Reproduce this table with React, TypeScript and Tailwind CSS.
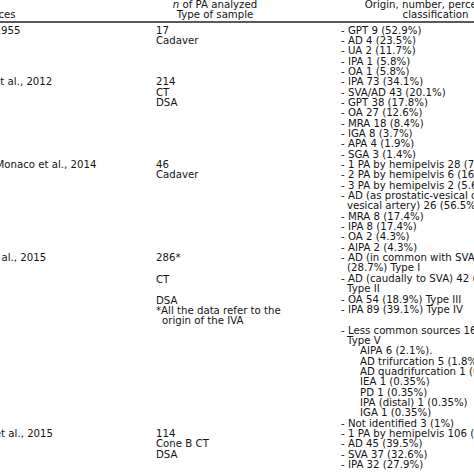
type Line = { t: string; i?: 0 | 1 | 2; h?: string };

type Row = { ref: string; n: Line[]; origin: Line[] };

const ROWS: Row[] = [
  {
    ref: 'Clegg, 1955',
    n: [{ t: '17' }, { t: 'Cadaver' }],
    origin: [
      { t: '- GPT 9 (52.9%)' },
      { t: '- AD 4 (23.5%)' },
      { t: '- UA 2 (11.7%)' },
      { t: '- IPA 1 (5.8%)' },
      { t: '- OA 1 (5.8%)' },
    ],
  },
  {
    ref: 'Bilhim et al., 2012',
    n: [{ t: '214' }, { t: 'CT' }, { t: 'DSA' }],
    origin: [
      { t: '- IPA 73 (34.1%)' },
      { t: '- SVA/AD 43 (20.1%)' },
      { t: '- GPT 38 (17.8%)' },
      { t: '- OA 27 (12.6%)' },
      { t: '- MRA 18 (8.4%)' },
      { t: '- IGA 8 (3.7%)' },
      { t: '- APA 4 (1.9%)' },
      { t: '- SGA 3 (1.4%)' },
    ],
  },
  {
    ref: 'Garcia-Monaco et al., 2014',
    n: [{ t: '46' }, { t: 'Cadaver' }],
    origin: [
      { t: '- 1 PA by hemipelvis 28 (77.8%)' },
      { t: '- 2 PA by hemipelvis 6 (16.7%)' },
      { t: '- 3 PA by hemipelvis 2 (5.6%)' },
      { t: '- AD (as prostatic-vesical or inferior' },
      { t: 'vesical artery) 26 (56.5%)', i: 1 },
      { t: '- MRA 8 (17.4%)' },
      { t: '- IPA 8 (17.4%)' },
      { t: '- OA 2 (4.3%)' },
      { t: '- AIPA 2 (4.3%)' },
    ],
  },
  {
    ref: 'Assis et al., 2015',
    n: [
      { t: '286*' },
      { t: '', h: 'h-[11.5px]' },
      { t: 'CT' },
      { t: '', h: 'h-[11px]' },
      { t: 'DSA', h: 'h-[9.6px] leading-[9.6px]' },
      { t: '*All the data refer to the', h: 'h-[9.6px] leading-[9.6px]' },
      { t: 'origin of the IVA', i: 1 },
    ],
    origin: [
      { t: '- AD (in common with SVA) 82' },
      { t: '(28.7%) Type I', i: 1 },
      { t: '- AD (caudally to SVA) 42 (14.7%)' },
      { t: 'Type II', i: 1 },
      { t: '- OA 54 (18.9%) Type III' },
      { t: '- IPA 89 (39.1%) Type IV' },
      { t: '' },
      { t: '- Less common sources 16 (5.6%)' },
      { t: 'Type V', i: 1 },
      { t: 'AIPA 6 (2.1%).', i: 2 },
      { t: 'AD trifurcation 5 (1.8%)', i: 2 },
      { t: 'AD quadrifurcation 1 (0.35%)', i: 2 },
      { t: 'IEA 1 (0.35%)', i: 2 },
      { t: 'PD 1 (0.35%)', i: 2 },
      { t: 'IPA (distal) 1 (0.35%)', i: 2 },
      { t: 'IGA 1 (0.35%)', i: 2 },
      { t: '- Not identified 3 (1%)' },
    ],
  },
  {
    ref: 'Zhang et al., 2015',
    n: [{ t: '114' }, { t: 'Cone B CT' }, { t: 'DSA' }],
    origin: [
      { t: '- 1 PA by hemipelvis 106 (93%)' },
      { t: '- AD 45 (39.5%)' },
      { t: '- SVA 37 (32.6%)' },
      { t: '- IPA 32 (27.9%)' },
    ],
  },
];

function Lines({ lines }: { lines: Line[] }) {
  return (
    <div>
      {lines.map((l, k) => (
        <div
          key={k}
          className={`${l.h ?? 'h-[10.35px]'} whitespace-nowrap ${l.i === 1 ? 'pl-[6px]' : l.i === 2 ? 'pl-[19px]' : ''}`}
        >
          {l.t}
        </div>
      ))}
    </div>
  );
}

export default function App() {
  return (
    <div className="h-[474px] w-[474px] overflow-hidden bg-white font-['DejaVu_Sans',sans-serif] text-[10.2px] leading-[10.35px] text-[#141414]">
      <div className="-ml-[41px] w-[760px]">
        <div className="grid grid-cols-[197px_185px_1fr]">
          <div className="flex flex-col justify-end whitespace-nowrap">References</div>
          <div className="w-[118px] text-center whitespace-nowrap">
            <div>
              <span className="italic">n</span> of PA analyzed
            </div>
            <div>Type of sample</div>
          </div>
          <div className="w-[189px] text-center whitespace-nowrap">
            <div>Origin, number, percentage</div>
            <div>classification</div>
          </div>
        </div>
        <div className="mt-[0.8px] h-[1.5px] bg-[#5a5a5a]" />
        <div className="pt-[2.6px]">
          {ROWS.map((r) => (
            <div key={r.ref} className="grid grid-cols-[197px_185px_1fr]">
              <div className="whitespace-nowrap">{r.ref}</div>
              <Lines lines={r.n} />
              <Lines lines={r.origin} />
            </div>
          ))}
        </div>
      </div>
    </div>
  );
}
